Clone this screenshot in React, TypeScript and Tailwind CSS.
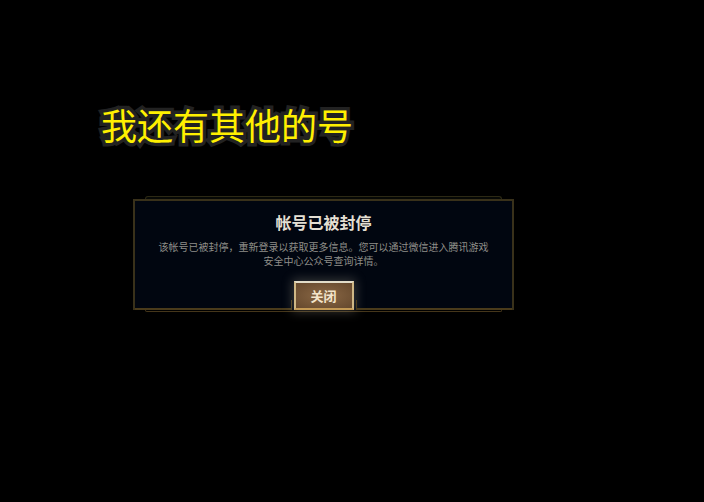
function BanDialog() {
  return (
    <section
      role="dialog"
      aria-labelledby="ban-title"
      aria-describedby="ban-text"
      className="ml-8 w-full max-w-[381px]"
    >
      <div className="mx-3 h-[3px] rounded-t-[3px] border-x border-t border-[#2c2914] bg-[#060806]" />
      <div className="border-x-2 border-t-2 border-[#39311a] bg-[#010610] pt-[11px] text-center">
        <h2 id="ban-title" className="text-base leading-5 font-bold text-[#e4dfd3]">
          帐号已被封停
        </h2>
        <p id="ban-text" className="mt-2 px-3 text-[10px] leading-[14px] text-[#8f8e89]">
          该帐号已被封停，重新登录以获取更多信息。您可以通过微信进入腾讯游戏
          <br />
          安全中心公众号查询详情。
        </p>
        <div className="mt-[13px] flex items-end gap-0.5">
          <div className="h-2.5 flex-1 border-r border-b-2 border-[#4a3b1b]" />
          <button
            type="button"
            className="h-[29px] w-[60px] border-2 border-t-[#e2dcc8] border-r-[#cfb785] border-b-[#c49a55] border-l-[#cfb785] bg-radial from-[#8a6845] to-[#65482d] text-[13px] leading-5 font-bold text-[#f3e5cb] shadow-[0_0_10px_2px_rgba(190,180,160,0.28)]"
          >
            关闭
          </button>
          <div className="h-2.5 flex-1 border-b-2 border-l border-[#4a3b1b]" />
        </div>
      </div>
      <div className="mx-3 h-[2px] rounded-b-[2px] border-x border-b border-[#45361a]" />
    </section>
  );
}

export default function App() {
  return (
    <main className="min-h-screen bg-black px-[101px] pt-[106px] font-['Noto_Sans_CJK_SC','Liberation_Sans',sans-serif]">
      <h1 className="text-4xl leading-9 font-normal text-[#fff000] [-webkit-text-stroke:7px_#222] [paint-order:stroke_fill] [stroke-linejoin:round]">
        我还有其他的号
      </h1>
      <div className="mt-[54px]">
        <BanDialog />
      </div>
    </main>
  );
}
